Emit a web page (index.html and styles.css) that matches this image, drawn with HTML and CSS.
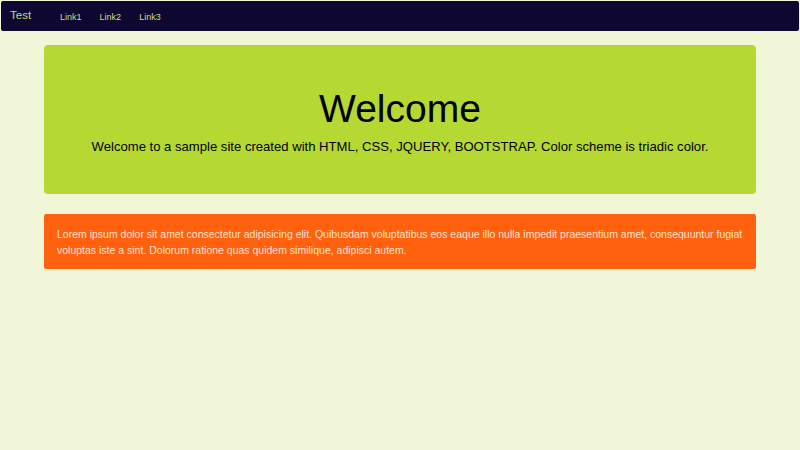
FILE: index.html
```html
<!DOCTYPE html>
<html lang="en">

<head>
  <meta charset="UTF-8" />
  <meta name="viewport" content="width=device-width, initial-scale=1.0" />
  <title>Test</title>
  <link rel="stylesheet" href="styles.css">
</head>

<body>
  <nav class="navbar">
    <a href="#" class="brand">Test</a>
    <ul class="nav-links">
      <li><a href="#">Link1</a></li>
      <li><a href="#">Link2</a></li>
      <li><a href="#">Link3</a></li>
    </ul>
  </nav>

  <div class="container">
    <div class="jumbotron">
      <h1>Welcome</h1>
      <p>Welcome to a sample site created with HTML, CSS, JQUERY, BOOTSTRAP. Color scheme is triadic color.</p>
    </div>

    <div class="info-box">
      Lorem ipsum dolor sit amet consectetur adipisicing elit. Quibusdam voluptatibus eos eaque illo nulla impedit praesentium amet, consequuntur fugiat voluptas iste a sint. Dolorum ratione quas quidem similique, adipisci autem.
    </div>
  </div>
</body>

</html>
```

FILE: styles.css
```css
body {
  font-family: "Liberation Sans", Arial, sans-serif;
  margin: 0;
  padding: 0;
  background-color: #f1f6d9;
  min-height: 100vh;
}

/* navbar */
.navbar {
  background-color: #0e0732;
  height: 28px;
  margin: 1px 1px 0 1px;
  border-radius: 2px;
  display: flex;
  align-items: center;
  padding: 0 9px 2px 9px;
}

.brand {
  color: #c3d87a;
  text-decoration: none;
  font-size: 11.5px;
  margin-right: 20px;
}

.nav-links {
  list-style: none;
  margin: 0;
  padding: 0;
  display: flex;
}

.nav-links a {
  color: #c9dc8a;
  text-decoration: none;
  font-size: 9px;
  padding: 0 9px;
}

.container {
  width: 712px;
  margin: 14px auto 0 auto;
}

.jumbotron {
  background-color: #b5d833;
  border-radius: 4px;
  height: 149px;
  box-sizing: border-box;
  padding-top: 42px;
  text-align: center;
  color: #000;
}

.jumbotron h1 {
  font-size: 39px;
  font-weight: normal;
  margin: 0;
  line-height: 44px;
}

.jumbotron p {
  font-size: 13.1px;
  margin: 8px 0 0 0;
}

.info-box {
  margin-top: 20px;
  background-color: #ff610f;
  color: #fde3cf;
  border-radius: 2px;
  font-size: 10.5px;
  line-height: 16px;
  padding: 12px 13px 11px 13px;
}
```
